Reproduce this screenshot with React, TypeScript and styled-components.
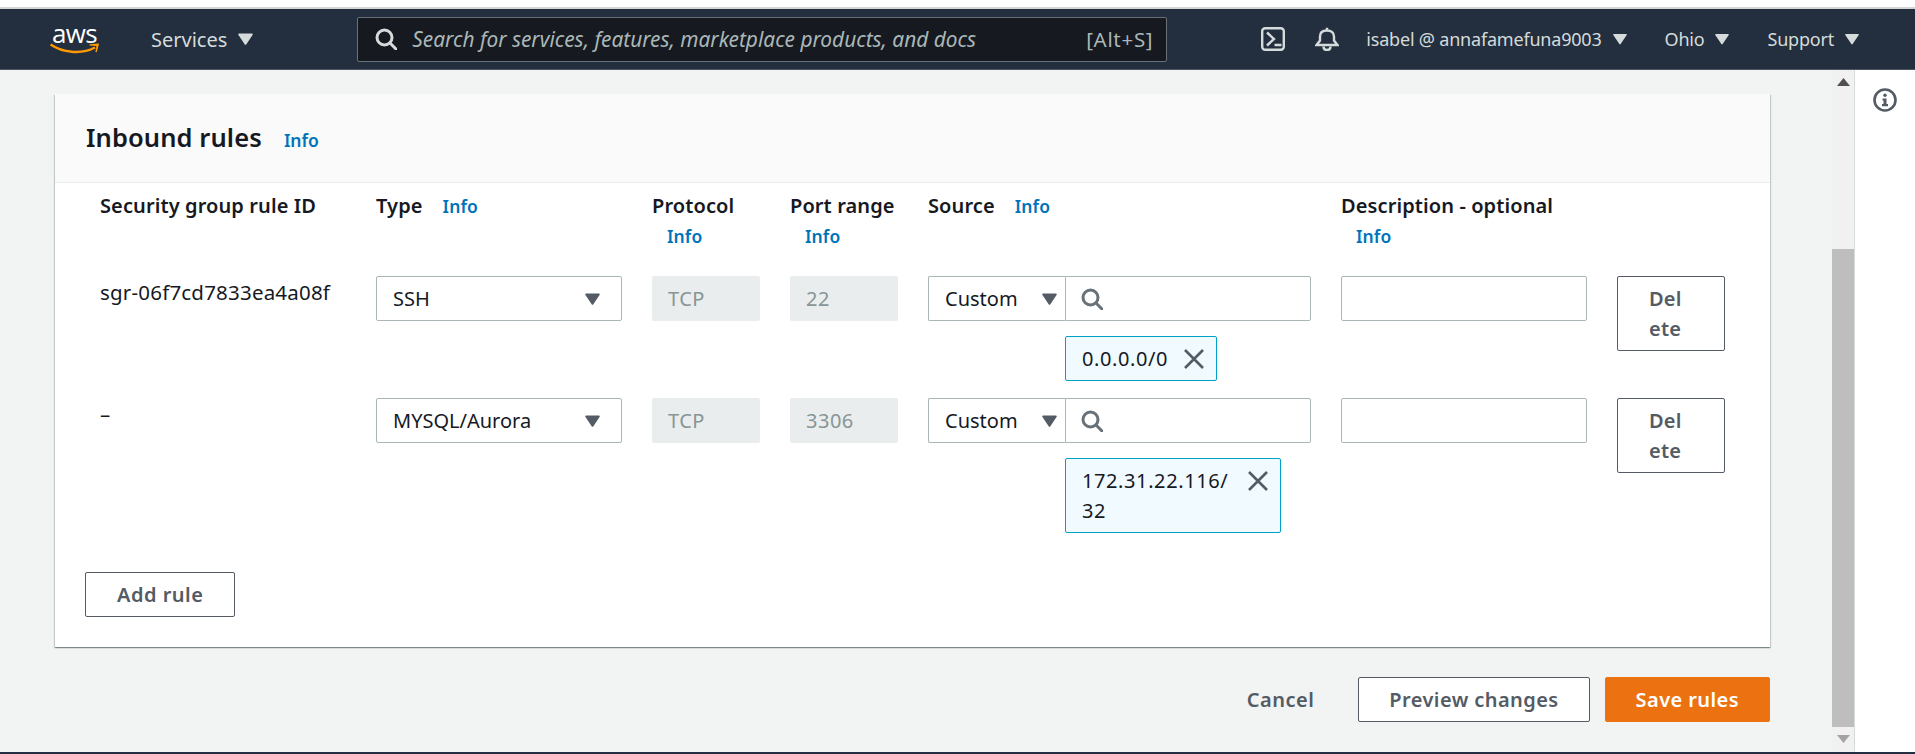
import React from "react";
import styled, { createGlobalStyle } from "styled-components";

const GlobalStyle = createGlobalStyle`
  html, body {
    margin: 0;
    height: 754px;
    overflow: hidden;
    background: #fff;
    font-family: "Noto Sans", "Open Sans", sans-serif;
    color: #16191f;
  }
  * { box-sizing: border-box; }
`;

const Page = styled.div`
  display: flex;
  flex-direction: column;
  height: 754px;
  padding-top: 7px;
`;

const NavBar = styled.header`
  display: flex;
  align-items: center;
  height: 63px;
  flex: none;
  padding-left: 50px;
  background: #232f3e;
  border-top: 2px solid #d5d5d5;
  border-bottom: 1px solid #4b5563;
  color: #d5dbdb;
`;

const Logo = styled.div`
  display: flex;
  flex-direction: column;
  align-items: center;
  width: 49px;
  flex: none;
`;

const LogoWord = styled.span`
  font-family: "Open Sans", sans-serif;
  font-size: 26px;
  line-height: 20px;
  letter-spacing: -0.6px;
  color: #fff;
`;

const LogoSmile = styled.svg`
  display: block;
  width: 49px;
  height: 12px;
`;

const NavItem = styled.div<{ $ml: number }>`
  display: flex;
  align-items: center;
  flex: none;
  gap: 11px;
  margin-left: ${(p) => p.$ml}px;
  font-size: 20px;
  white-space: nowrap;
`;

const SmallNavItem = styled(NavItem)`
  font-size: 18px;
  letter-spacing: -0.2px;
`;

const Caret = styled.svg<{ $w?: number }>`
  width: ${(p) => p.$w ?? 15}px;
  height: 12px;
  flex: none;
  fill: currentColor;
`;

const SearchBar = styled.div`
  display: flex;
  align-items: center;
  width: 810px;
  height: 45px;
  margin-left: 104px;
  flex: none;
  padding: 0 13px 0 17px;
  background: #16191f;
  border: 1px solid #687078;
  border-radius: 2px;
  font-size: 20.5px;
`;

const SearchGlass = styled.svg<{ $tone: string }>`
  width: 22px;
  height: 22px;
  flex: none;
  stroke: ${(p) => p.$tone};
  fill: none;
`;

const SearchHint = styled.span`
  margin-left: 15px;
  font-size: 20.85px;
  font-style: italic;
  color: #aab7b8;
  white-space: nowrap;
`;

const SearchKeys = styled.span`
  margin-left: auto;
  color: #aab7b8;
  letter-spacing: 0.7px;
`;

const NavIcon = styled.svg<{ $ml: number }>`
  width: 24px;
  height: 24px;
  flex: none;
  margin-left: ${(p) => p.$ml}px;
  fill: none;
  stroke: #d5dbdb;
  stroke-width: 2.4;
`;

const Body = styled.div`
  display: flex;
  flex: 1;
  min-height: 0;
`;

const Main = styled.main`
  flex: 1;
  min-width: 0;
  padding: 24px 62px 0 55px;
  background: #f2f3f3;
`;

const Panel = styled.section`
  background: #fff;
  box-shadow: 0 1px 1px 0 rgba(0, 28, 36, 0.3), 1px 1px 1px 0 rgba(0, 28, 36, 0.15),
    -1px 1px 1px 0 rgba(0, 28, 36, 0.15);
`;

const PanelHeader = styled.div`
  display: flex;
  align-items: baseline;
  gap: 22px;
  height: 89px;
  padding: 25px 30px 0 31px;
  background: #fafafa;
  border-bottom: 1px solid #eaeded;
`;

const Title = styled.h2`
  margin: 0;
  font-size: 25.5px;
  line-height: 36px;
  font-weight: 600;
  letter-spacing: 0.1px;
`;

const InfoLink = styled.a`
  color: #0073bb;
  font-size: 17.5px;
  font-weight: 600;
`;

const PanelBody = styled.div`
  padding: 8px 30px 30px 30px;
`;

const RuleGrid = styled.div`
  display: grid;
  grid-template-columns: 246px 246px 108px 108px 383px 246px 108px;
  column-gap: 30px;
  padding-left: 15px;
`;

const HeadRow = styled(RuleGrid)`
  height: 85px;
`;

const RuleRow = styled(RuleGrid)`
  margin-bottom: 17px;
  align-items: start;
`;

const HeadCell = styled.div`
  font-size: 20px;
  line-height: 30px;
  font-weight: 600;
  letter-spacing: 0.1px;
  white-space: nowrap;
`;

const HeadInfo = styled(InfoLink)<{ $below?: boolean }>`
  display: ${(p) => (p.$below ? "block" : "inline")};
  margin-left: ${(p) => (p.$below ? 15 : 20)}px;
  line-height: 30px;
`;

const RuleId = styled.div`
  padding-top: 1px;
  font-size: 20.5px;
  line-height: 30px;
  letter-spacing: 0.2px;
  white-space: nowrap;
`;

const Select = styled.div<{ $w?: number; $joined?: boolean }>`
  display: flex;
  align-items: center;
  justify-content: space-between;
  width: ${(p) => (p.$w ? `${p.$w}px` : "100%")};
  height: 45px;
  flex: none;
  padding: 0 ${(p) => (p.$joined ? 8 : 21)}px 0 16px;
  background: #fff;
  border: 1px solid #aab7b8;
  border-radius: ${(p) => (p.$joined ? "2px 0 0 2px" : "2px")};
  border-right-width: ${(p) => (p.$joined ? 0 : 1)}px;
  font-size: 20px;
  color: #16191f;
`;

const SelectCaret = styled(Caret)`
  color: #545b64;
`;

const Disabled = styled.div`
  display: flex;
  align-items: center;
  height: 45px;
  padding-left: 16px;
  background: #eaeded;
  border-radius: 2px;
  font-size: 20px;
  letter-spacing: 0.5px;
  color: #879596;
`;

const SourceCell = styled.div`
  display: flex;
  flex-direction: column;
`;

const SourceInputs = styled.div`
  display: flex;
`;

const SearchField = styled.div`
  display: flex;
  align-items: center;
  flex: 1;
  height: 45px;
  padding-left: 15px;
  border: 1px solid #aab7b8;
  border-radius: 0 2px 2px 0;
`;

const Token = styled.div`
  display: flex;
  align-items: flex-start;
  gap: 16px;
  width: fit-content;
  max-width: 216px;
  margin: 15px 0 0 137px;
  padding: 6.5px 12px 6.5px 16px;
  background: #f1faff;
  border: 1px solid #00a1c9;
  border-radius: 2px;
  font-size: 20px;
  line-height: 30px;
  letter-spacing: 0.6px;
`;

const TokenText = styled.span`
  overflow-wrap: anywhere;
`;

const TokenClose = styled.svg`
  width: 20px;
  height: 20px;
  flex: none;
  margin-top: 5px;
  stroke: #545b64;
  stroke-width: 2.6;
  fill: none;
`;

const TextInput = styled.input`
  display: block;
  width: 100%;
  height: 45px;
  padding: 0 16px;
  background: #fff;
  border: 1px solid #aab7b8;
  border-radius: 2px;
  outline: none;
`;

const Button = styled.button<{ $variant?: "primary" | "link" }>`
  flex: none;
  padding: 6.5px ${(p) => (p.$variant === "link" ? 28 : 31)}px;
  min-height: 45px;
  font-family: inherit;
  font-size: 20px;
  line-height: 30px;
  font-weight: 600;
  letter-spacing: 0.5px;
  text-align: left;
  border-radius: 2px;
  color: ${(p) => (p.$variant === "primary" ? "#fff" : "#545b64")};
  background: ${(p) =>
    p.$variant === "primary" ? "#ec7211" : p.$variant === "link" ? "transparent" : "#fff"};
  border: 1px solid
    ${(p) =>
      p.$variant === "primary" ? "#ec7211" : p.$variant === "link" ? "transparent" : "#545b64"};
`;

const DeleteButton = styled(Button)`
  width: 108px;
  padding: 6.5px 31px;
  letter-spacing: 0.2px;
  word-break: break-all;
`;

const AddRuleButton = styled(Button)`
  margin-top: 22px;
`;

const FooterButton = styled(Button)`
  padding: 6.5px 30px;
  letter-spacing: 0.42px;
`;

const Actions = styled.div`
  display: flex;
  justify-content: flex-end;
  align-items: center;
  gap: 15px;
  margin-top: 30px;
`;

const Scrollbar = styled.div`
  display: flex;
  flex-direction: column;
  align-items: center;
  width: 22px;
  flex: none;
  background: #f1f1f1;
`;

const ScrollArrow = styled.svg<{ $tone: string }>`
  width: 13px;
  height: 8px;
  flex: none;
  margin: 8px 0;
  fill: ${(p) => p.$tone};
`;

const ScrollThumb = styled.div`
  width: 100%;
  height: 478px;
  margin-top: 155px;
  background: #bebebe;
`;

const Rail = styled.aside`
  width: 61px;
  flex: none;
  padding: 18px 0 0 18px;
  background: #fff;
  border-left: 1px solid #d5dbdb;
`;

const RailIcon = styled.svg`
  display: block;
  width: 24px;
  height: 24px;
`;

const FooterLine = styled.div`
  height: 2px;
  flex: none;
  background: #232f3e;
`;

const CaretDown = (props: { $w?: number; className?: string }) => (
  <Caret viewBox="0 0 15 12" {...props}>
    <path d="M1 0.6h13a.8.8 0 0 1 .7 1.2L8.2 11.4a.8.8 0 0 1-1.4 0L.3 1.8A.8.8 0 0 1 1 .6z" />
  </Caret>
);

const Glass = ({ tone }: { tone: string }) => (
  <SearchGlass viewBox="0 0 22 22" $tone={tone} strokeWidth={3}>
    <circle cx="9.5" cy="9.5" r="7.5" />
    <path d="M15 15l6 6" strokeLinecap="round" />
  </SearchGlass>
);

const rules = [
  { id: "sgr-06f7cd7833ea4a08f", type: "SSH", port: "22", cidr: "0.0.0.0/0" },
  { id: "–", type: "MYSQL/Aurora", port: "3306", cidr: "172.31.22.116/32" },
];

export default function App() {
  return (
    <Page>
      <GlobalStyle />
      <NavBar>
        <Logo>
          <LogoWord>aws</LogoWord>
          <LogoSmile viewBox="0 0 49 12">
            <path d="M.6 1.500C12 9.500 31 12 45 4.500" fill="none" stroke="#f90" strokeWidth="2.4" />
            <path d="M39.500 1.200l8.800-.7c.6 0 .7.3.6.8l-2.200 8-1.300-.3 1-5.900-6.800-.5z" fill="#f90" />
          </LogoSmile>
        </Logo>
        <NavItem $ml={52}>
          Services
          <CaretDown />
        </NavItem>
        <SearchBar>
          <Glass tone="#d5dbdb" />
          <SearchHint>Search for services, features, marketplace products, and docs</SearchHint>
          <SearchKeys>[Alt+S]</SearchKeys>
        </SearchBar>
        <NavIcon viewBox="0 0 24 24" $ml={94}>
          <rect x="1.2" y="1.2" width="21.6" height="21.6" rx="3" />
          <path d="M6 5.500l7 6.500-7 6.500M13.500 18h7" />
        </NavIcon>
        <NavIcon viewBox="0 0 24 24" $ml={30}>
          <path d="M1.500 18h21L19 13.500V9.500C19 5.500 16 3.500 12 3.500S5 5.500 5 9.500v4z" />
          <path d="M12 .8v2.700M8.500 19.500c0 2.200 1.500 3.500 3.500 3.500s3.500-1.300 3.500-3.500" />
        </NavIcon>
        <SmallNavItem $ml={27}>
          isabel @ annafamefuna9003
          <CaretDown $w={14} />
        </SmallNavItem>
        <SmallNavItem $ml={38}>
          Ohio
          <CaretDown $w={14} />
        </SmallNavItem>
        <SmallNavItem $ml={38}>
          Support
          <CaretDown $w={14} />
        </SmallNavItem>
      </NavBar>
      <Body>
        <Main>
          <Panel>
            <PanelHeader>
              <Title>Inbound rules</Title>
              <InfoLink>Info</InfoLink>
            </PanelHeader>
            <PanelBody>
              <HeadRow>
                <HeadCell>Security group rule ID</HeadCell>
                <HeadCell>
                  Type<HeadInfo>Info</HeadInfo>
                </HeadCell>
                <HeadCell>
                  Protocol<HeadInfo $below>Info</HeadInfo>
                </HeadCell>
                <HeadCell>
                  Port range<HeadInfo $below>Info</HeadInfo>
                </HeadCell>
                <HeadCell>
                  Source<HeadInfo>Info</HeadInfo>
                </HeadCell>
                <HeadCell>
                  Description - optional<HeadInfo $below>Info</HeadInfo>
                </HeadCell>
              </HeadRow>
              {rules.map((rule) => (
                <RuleRow key={rule.type}>
                  <RuleId>{rule.id}</RuleId>
                  <Select>
                    {rule.type}
                    <SelectCaret as={CaretDown} />
                  </Select>
                  <Disabled>TCP</Disabled>
                  <Disabled>{rule.port}</Disabled>
                  <SourceCell>
                    <SourceInputs>
                      <Select $w={137} $joined>
                        Custom
                        <SelectCaret as={CaretDown} />
                      </Select>
                      <SearchField>
                        <Glass tone="#687078" />
                      </SearchField>
                    </SourceInputs>
                    <Token>
                      <TokenText>{rule.cidr}</TokenText>
                      <TokenClose viewBox="0 0 20 20">
                        <path d="M1 1l18 18M19 1L1 19" />
                      </TokenClose>
                    </Token>
                  </SourceCell>
                  <TextInput />
                  <DeleteButton>Delete</DeleteButton>
                </RuleRow>
              ))}
              <AddRuleButton>Add rule</AddRuleButton>
            </PanelBody>
          </Panel>
          <Actions>
            <Button $variant="link">Cancel</Button>
            <FooterButton>Preview changes</FooterButton>
            <FooterButton $variant="primary">Save rules</FooterButton>
          </Actions>
        </Main>
        <Scrollbar>
          <ScrollArrow viewBox="0 0 13 8" $tone="#505050">
            <path d="M6.500 0L13 8H0z" />
          </ScrollArrow>
          <ScrollThumb />
          <ScrollArrow viewBox="0 0 13 8" $tone="#a3a3a3">
            <path d="M0 0h13L6.500 8z" />
          </ScrollArrow>
        </Scrollbar>
        <Rail>
          <RailIcon viewBox="0 0 24 24">
            <circle cx="12" cy="12" r="10.500" fill="none" stroke="#545b64" strokeWidth="2.600" />
            <circle cx="12" cy="7.200" r="1.700" fill="#545b64" />
            <path d="M9.500 10.500h4v5.500h1.500v2.200H9v-2.200h1.500V12.500h-1z" fill="#545b64" />
          </RailIcon>
        </Rail>
      </Body>
      <FooterLine />
    </Page>
  );
}
